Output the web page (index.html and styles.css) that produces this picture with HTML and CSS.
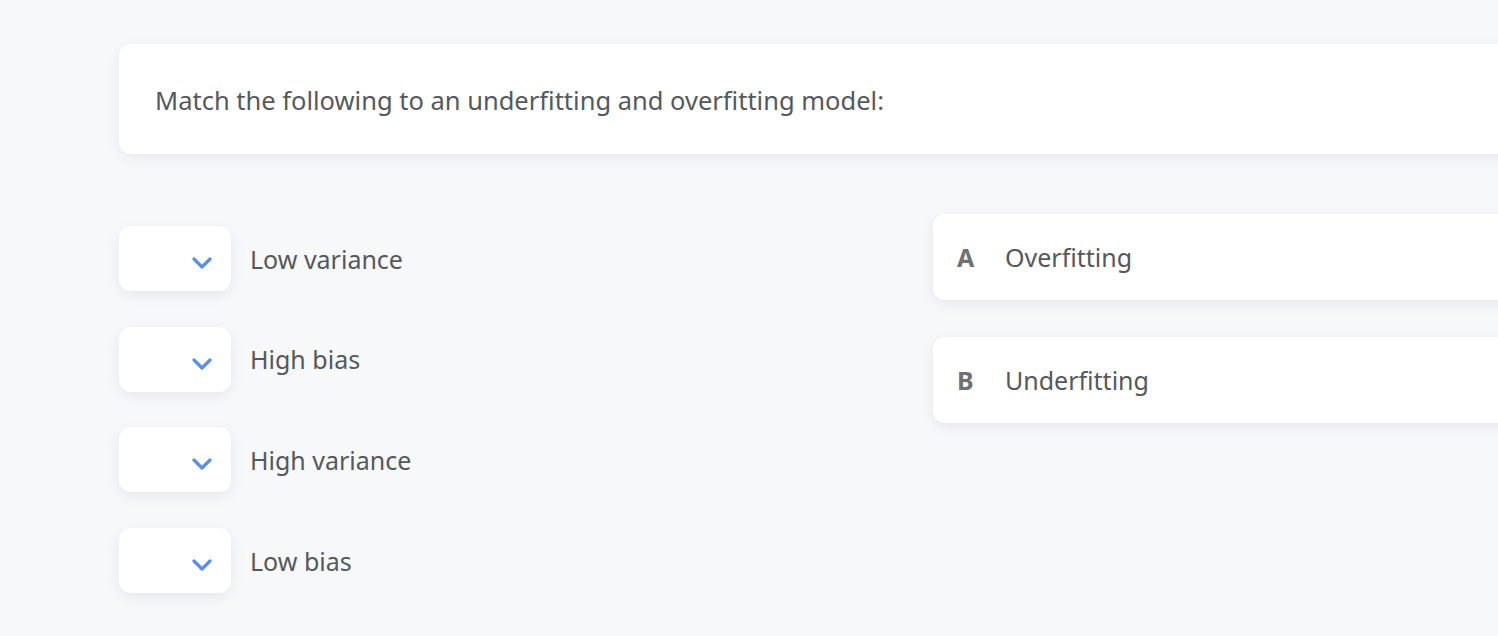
FILE: index.html
```html
<!DOCTYPE html>
<html lang="en">
<head>
<meta charset="utf-8">
<title>Match</title>
<link rel="stylesheet" href="styles.css">
</head>
<body>
<div class="page">
  <div class="question">Match the following to an underfitting and overfitting model:</div>
  <div class="matching">
    <div class="prompts">
      <div class="prompt">
        <div class="select"><svg class="chev" width="20" height="12" viewBox="0 0 20 12"><polyline points="2,2 10,10 18,2" fill="none" stroke="#5b8fe4" stroke-width="3.2" stroke-linecap="round" stroke-linejoin="round"/></svg></div>
        <span class="label">Low variance</span>
      </div>
      <div class="prompt">
        <div class="select"><svg class="chev" width="20" height="12" viewBox="0 0 20 12"><polyline points="2,2 10,10 18,2" fill="none" stroke="#5b8fe4" stroke-width="3.2" stroke-linecap="round" stroke-linejoin="round"/></svg></div>
        <span class="label">High bias</span>
      </div>
      <div class="prompt">
        <div class="select"><svg class="chev" width="20" height="12" viewBox="0 0 20 12"><polyline points="2,2 10,10 18,2" fill="none" stroke="#5b8fe4" stroke-width="3.2" stroke-linecap="round" stroke-linejoin="round"/></svg></div>
        <span class="label">High variance</span>
      </div>
      <div class="prompt">
        <div class="select"><svg class="chev" width="20" height="12" viewBox="0 0 20 12"><polyline points="2,2 10,10 18,2" fill="none" stroke="#5b8fe4" stroke-width="3.2" stroke-linecap="round" stroke-linejoin="round"/></svg></div>
        <span class="label">Low bias</span>
      </div>
    </div>
    <div class="options">
      <div class="option"><span class="letter">A</span><span class="otext">Overfitting</span></div>
      <div class="option"><span class="letter">B</span><span class="otext">Underfitting</span></div>
    </div>
  </div>
</div>
</body>
</html>
```
FILE: styles.css
```css
html, body {
  margin: 0;
  padding: 0;
  background: #f7f8fa;
  overflow: hidden;
}
body {
  font-family: "Noto Sans", "Open Sans", sans-serif;
  color: #55585c;
  width: 1498px;
  height: 636px;
}
.page {
  padding: 44px 0 0 119px;
  width: 1379px;
  overflow: hidden;
}
.question {
  height: 110px;
  width: 1420px;
  background: #fff;
  border-radius: 12px;
  box-shadow: 0 4px 14px rgba(30, 40, 60, 0.07);
  display: flex;
  align-items: center;
  padding: 2px 36px 0;
  font-size: 25.5px;
  box-sizing: border-box;
}
.matching {
  margin-top: 60px;
  display: grid;
  grid-template-columns: 778px 606px;
  column-gap: 36px;
  align-items: start;
  padding-bottom: 30px;
}
.prompts {
  display: flex;
  flex-direction: column;
  gap: 35.7px;
  padding-top: 12px;
}
.prompt {
  display: flex;
  align-items: center;
  gap: 19px;
}
.select {
  width: 112px;
  height: 65px;
  background: #fff;
  border-radius: 12px;
  box-shadow: 0 4px 14px rgba(30, 40, 60, 0.08);
  display: flex;
  align-items: center;
  justify-content: flex-end;
  padding: 9px 19px 0 0;
  box-sizing: border-box;
}
.chev {
  display: block;
}
.label {
  font-size: 25px;
}
.options {
  display: flex;
  flex-direction: column;
  gap: 37px;
}
.option {
  height: 86px;
  background: #fff;
  border-radius: 12px;
  box-shadow: 0 4px 14px rgba(30, 40, 60, 0.08);
  display: flex;
  align-items: center;
  padding: 0 24px;
  box-sizing: border-box;
}
.letter {
  font-weight: 700;
  font-size: 25px;
  color: #707173;
  width: 48px;
}
.otext {
  font-size: 25px;
}
```
